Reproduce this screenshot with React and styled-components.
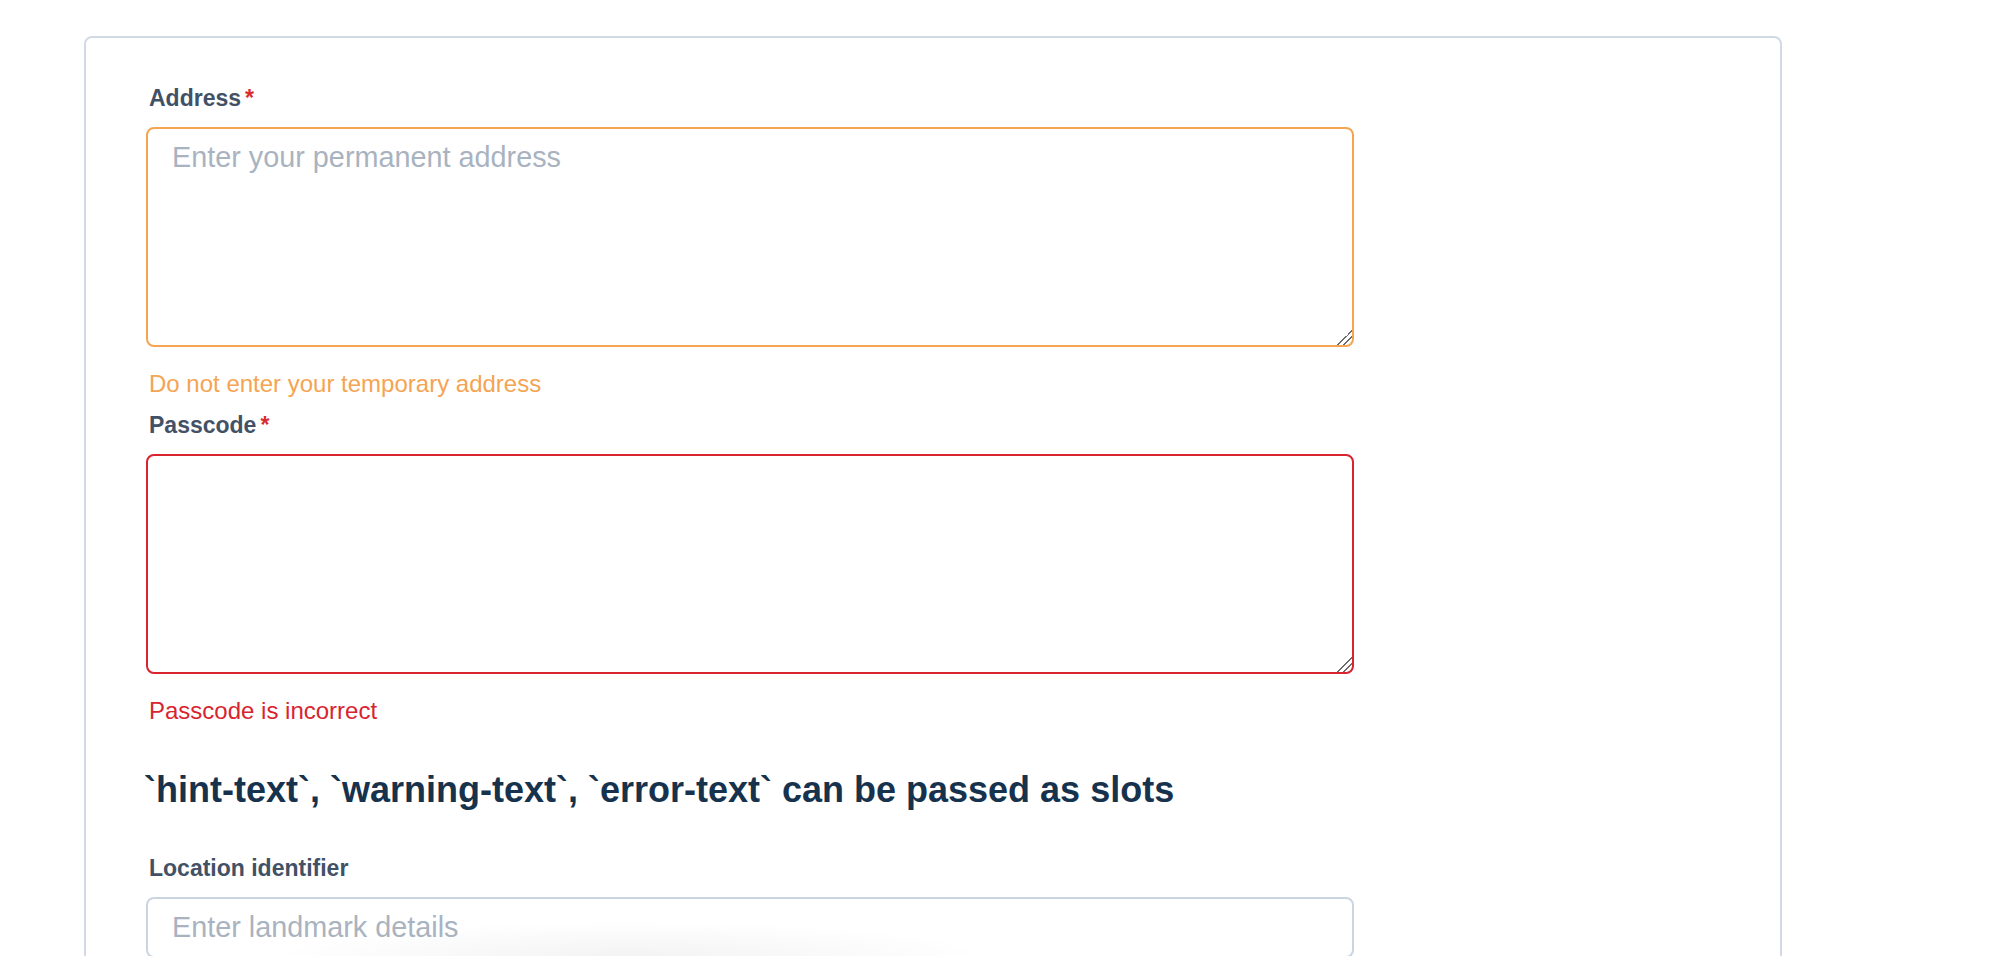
import styled, { createGlobalStyle } from "styled-components";

const GlobalStyle = createGlobalStyle`
  html, body {
    margin: 0;
    background: #ffffff;
    overflow: hidden;
  }

  body {
    font-family: "Liberation Sans", Arial, Helvetica, sans-serif;
  }
`;

const Page = styled.div`
  padding: 36px 0 0 84px;
  height: 956px;
  box-sizing: border-box;
  overflow: hidden;
`;

const Card = styled.div`
  width: 1698px;
  min-height: 1100px;
  box-sizing: border-box;
  border: 2px solid #d1dae4;
  border-radius: 8px;
  padding: 42px 0 0 60px;
`;

const Field = styled.div`
  display: flex;
  flex-direction: column;
  align-items: flex-start;
  margin-top: ${(p) => p.$gap || 0}px;
`;

const Label = styled.label`
  display: flex;
  align-items: baseline;
  gap: 4px;
  margin-left: 3px;
  font-size: 23px;
  line-height: 36px;
  font-weight: 700;
  color: #425166;
`;

const Required = styled.span`
  color: #d92d2d;
  font-size: 23px;
`;

const tones = {
  warning: "#f5a452",
  error: "#d9232d",
  default: "#cbd5e1",
};

const TextArea = styled.textarea`
  display: block;
  width: 1208px;
  height: 220px;
  margin-top: 11px;
  box-sizing: border-box;
  padding: 11px 24px;
  border: 2px solid ${(p) => tones[p.$tone || "default"]};
  border-radius: 8px;
  font-family: inherit;
  font-size: 28.8px;
  line-height: 34.5px;
  color: #1f2937;
  background: #ffffff;
  outline: none;

  &::placeholder {
    color: #a9b3bf;
  }

  &::-webkit-resizer {
    background: linear-gradient(
      135deg,
      transparent 0 50%,
      #6b6b6b 50% 56%,
      transparent 56% 70%,
      #6b6b6b 70% 76%,
      transparent 76%
    );
  }
`;

const Input = styled.input`
  display: block;
  width: 1208px;
  margin-top: 11px;
  box-sizing: border-box;
  padding: 11px 24px;
  border: 2px solid #cbd5e1;
  border-radius: 8px;
  font-family: inherit;
  font-size: 28.8px;
  line-height: 34.5px;
  color: #1f2937;
  outline: none;
  background: radial-gradient(
      ellipse 360px 34px at 40% 100%,
      rgba(15, 23, 42, 0.05),
      rgba(255, 255, 255, 0) 100%
    ),
    #ffffff;

  &::placeholder {
    color: #a9b3bf;
  }
`;

const Message = styled.p`
  margin: 19px 0 0 3px;
  font-size: 24px;
  line-height: 36px;
  color: ${(p) => (p.$tone === "error" ? "#d7252f" : "#f5a452")};
`;

const Heading = styled.h2`
  margin: 37px 0 0 -2px;
  font-size: 36px;
  line-height: 47px;
  font-weight: 700;
  color: #17324d;
`;

const App = () => {
  return (
    <>
      <GlobalStyle />
      <Page>
        <Card>
          <Field>
            <Label>
              Address<Required>*</Required>
            </Label>
            <TextArea $tone="warning" placeholder="Enter your permanent address" />
            <Message $tone="warning">Do not enter your temporary address</Message>
          </Field>
          <Field $gap={5}>
            <Label>
              Passcode<Required>*</Required>
            </Label>
            <TextArea $tone="error" />
            <Message $tone="error">Passcode is incorrect</Message>
          </Field>
          <Heading>`hint-text`, `warning-text`, `error-text` can be passed as slots</Heading>
          <Field $gap={37}>
            <Label>Location identifier</Label>
            <Input placeholder="Enter landmark details" />
          </Field>
        </Card>
      </Page>
    </>
  );
};

export default App;
